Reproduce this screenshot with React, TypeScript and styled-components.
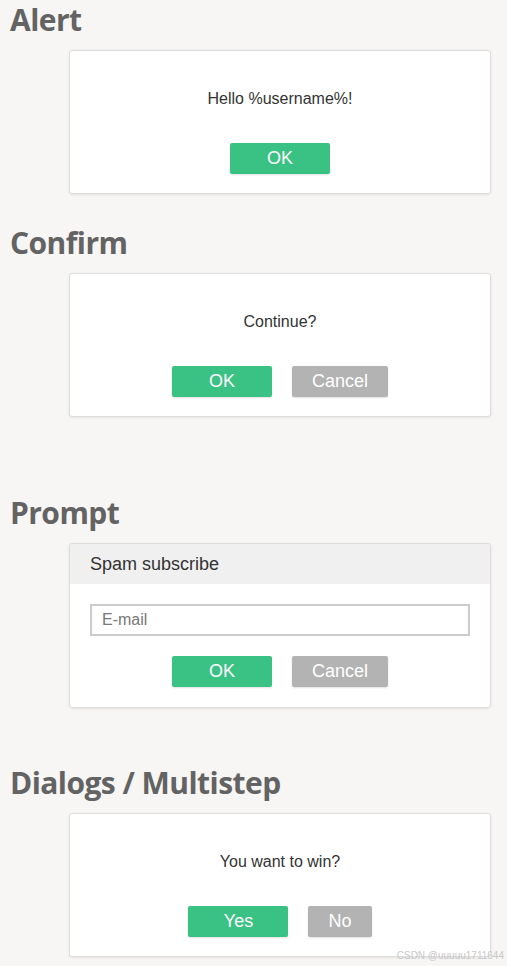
import { createGlobalStyle, styled } from "styled-components";

const GlobalStyle = createGlobalStyle`
  html, body {
    margin: 0;
    padding: 0;
    background: #f7f6f4;
  }
  body {
    font-family: "Liberation Sans", Arial, sans-serif;
    color: #333;
  }
`;

const Page = styled.div`
  position: relative;
  min-height: 966px;
  padding-top: 2px;
  box-sizing: border-box;
`;

const Section = styled.section<{ $gap: number }>`
  margin-top: ${(p) => p.$gap}px;
`;

const Heading = styled.h2`
  margin: 0 0 12px 10px;
  font-family: "Open Sans", "Noto Sans", sans-serif;
  font-weight: 700;
  font-size: 30px;
  line-height: 36px;
  letter-spacing: -0.55px;
  color: #636363;
`;

const Card = styled.div`
  margin: 0 16px 0 69px;
  background: #fff;
  border: 1px solid #dcdcdc;
  border-radius: 3px;
  box-shadow: 0 1px 3px rgba(0, 0, 0, 0.08);
  overflow: hidden;
`;

const Body = styled.div`
  padding: 38px 20px 19px;
  display: flex;
  flex-direction: column;
  align-items: center;
`;

const Message = styled.p`
  margin: 0 0 34px;
  font-size: 16px;
  line-height: 20px;
  color: #333;
`;

const CardHeader = styled.div`
  height: 40px;
  padding: 0 20px;
  display: flex;
  align-items: center;
  background: #f0f0f0;
  font-size: 18px;
  color: #333;
`;

const FormBody = styled.div`
  padding: 20px;
  display: flex;
  flex-direction: column;
  gap: 20px;
`;

const Input = styled.input`
  box-sizing: border-box;
  width: 100%;
  height: 32px;
  padding: 0 10px;
  border: 2px solid #cccccc;
  border-radius: 0;
  font-family: "Liberation Sans", Arial, sans-serif;
  font-size: 16px;
  color: #333;
  outline: none;
  &::placeholder {
    color: #777;
  }
`;

const Actions = styled.div`
  display: flex;
  justify-content: center;
  gap: 20px;
`;

const Button = styled.button<{ $primary?: boolean }>`
  height: 31px;
  min-width: ${(p) => (p.$primary ? "100px" : "0")};
  padding: 0 20px;
  border: none;
  border-radius: 2px;
  background: ${(p) => (p.$primary ? "#3ac184" : "#b3b3b3")};
  box-shadow: 0 1px 2px rgba(0, 0, 0, 0.12);
  color: #fff;
  font-family: "Liberation Sans", Arial, sans-serif;
  font-size: 18px;
  line-height: 31px;
  cursor: pointer;
`;

const Watermark = styled.span`
  position: absolute;
  right: 3px;
  bottom: 5px;
  font-family: "Liberation Sans", Arial, sans-serif;
  font-size: 10px;
  color: #c8c8c8;
`;

export default function App() {
  return (
    <>
      <GlobalStyle />
      <Page>
        <Section $gap={0}>
          <Heading>Alert</Heading>
          <Card>
            <Body>
              <Message>Hello %username%!</Message>
              <Actions>
                <Button $primary>OK</Button>
              </Actions>
            </Body>
          </Card>
        </Section>

        <Section $gap={31}>
          <Heading>Confirm</Heading>
          <Card>
            <Body>
              <Message>Continue?</Message>
              <Actions>
                <Button $primary>OK</Button>
                <Button>Cancel</Button>
              </Actions>
            </Body>
          </Card>
        </Section>

        <Section $gap={78}>
          <Heading>Prompt</Heading>
          <Card>
            <CardHeader>Spam subscribe</CardHeader>
            <FormBody>
              <Input placeholder="E-mail" />
              <Actions>
                <Button $primary>OK</Button>
                <Button>Cancel</Button>
              </Actions>
            </FormBody>
          </Card>
        </Section>

        <Section $gap={57}>
          <Heading>Dialogs / Multistep</Heading>
          <Card>
            <Body>
              <Message>You want to win?</Message>
              <Actions>
                <Button $primary>Yes</Button>
                <Button>No</Button>
              </Actions>
            </Body>
          </Card>
        </Section>

        <Watermark>CSDN @uuuuu1711644</Watermark>
      </Page>
    </>
  );
}
